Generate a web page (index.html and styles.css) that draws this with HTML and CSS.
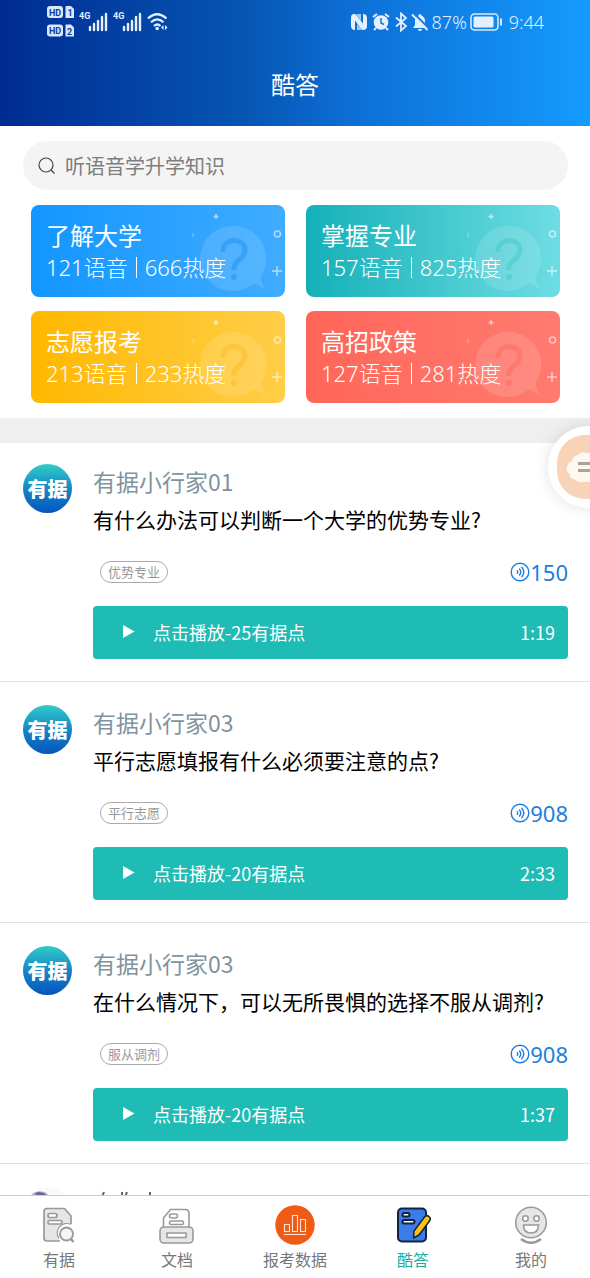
FILE: index.html
```html
<!DOCTYPE html>
<html lang="zh-CN">
<head>
<meta charset="utf-8">
<meta name="viewport" content="width=device-width, initial-scale=1">
<title>酷答</title>
<link rel="stylesheet" href="styles.css">
</head>
<body>
<svg class="defs" aria-hidden="true">
  <symbol id="art" viewBox="0 0 96 92">
    <path d="M41 21a32.500 32.500 0 1 0 21 57l11 6c-2-3-4-8-4-13A32.500 32.500 0 0 0 41 21z" fill="#fff" fill-opacity=".13"/>
    <path class="art-mark" d="M31 47c-1-15 22-15 22-2 0 10-11 9-11 18v2" fill="none" stroke-width="5"/>
    <circle class="art-dot" cx="42" cy="72" r="3"/>
    <path d="M24 9v5M21.500 11.500h5M85 61v10M80 66h10" stroke="#fff" stroke-opacity=".6" stroke-width="1.500"/>
    <circle cx="85.500" cy="29" r="3" fill="none" stroke="#fff" stroke-opacity=".55" stroke-width="1.600"/>
    <circle cx="0" cy="30" r="2.500" fill="#fff" fill-opacity=".2"/>
  </symbol>
  <symbol id="bars" viewBox="0 0 32 22">
    <path d="M11 19v-3M15 19v-6M19 19v-9M23 19V6M27 19V3" stroke="#e4efff" stroke-width="2.400" stroke-linecap="round"/>
  </symbol>
  <symbol id="sound" viewBox="0 0 20 20">
    <g fill="none" stroke="#1b7fe0" stroke-width="1.400" stroke-linecap="round">
      <circle cx="10" cy="10" r="8.800"/>
      <path d="M7.300 8.800q1 1.200 0 2.400M9.500 7q2.500 3 0 6M11.800 5.300q4 4.700 0 9.400"/>
    </g>
  </symbol>
  <symbol id="play" viewBox="0 0 12 14"><path d="M0 0l11.500 6.500L0 13z" fill="#fff"/></symbol>
</svg>

<div class="app">
  <header class="top">
    <div class="status">
      <div class="status-left">
        <svg width="28" height="32" viewBox="0 0 28 32" aria-hidden="true">
          <g fill="#d9e8ff"><rect x="0" y="0" width="16" height="12" rx="3"/><path d="M19 0h5l3 3v9h-8.500V1z"/><rect x="0" y="18.500" width="16" height="12" rx="3"/><path d="M19 18.500h5l3 3v9h-8.500v-11z"/></g>
          <g class="hd"><text x="2" y="9.500">HD</text><text x="20.500" y="10">1</text><text x="2" y="28">HD</text><text x="20" y="28.500">2</text></g>
        </svg>
        <span class="signal"><span class="net">4G</span><svg width="32" height="22"><use href="#bars"/></svg></span>
        <span class="signal"><span class="net">4G</span><svg width="32" height="22"><use href="#bars"/></svg></span>
        <svg class="wifi" width="22" height="20" viewBox="0 0 22 20" aria-hidden="true">
          <g fill="none" stroke="#e4efff" stroke-width="2.200"><path d="M1 6.500q9-8.500 18.500 0M4 10.300q6.200-5.800 12.500 0M7 14q3.300-3 6.500 0"/></g>
          <circle cx="10.200" cy="16.500" r="1.800" fill="#e4efff"/><path d="M16.500 13v5L14 15.500zM18 13v5l2.500-2.500z" fill="#e4efff"/>
        </svg>
      </div>
      <div class="status-right">
        <svg width="18" height="18" viewBox="0 0 18 18" aria-hidden="true"><path d="M4 1h1.500L13 10.500V1q4 0 4 4v8q0 4-4 4h-1L5 7.500V17q-4 0-4-4V5q0-4 3-4z" fill="#e4efff"/><path d="M7 1h4v6.500L7 2.500zM7 17v-6l4 5v1z" fill="#e4efff" fill-opacity=".7"/></svg>
        <svg width="20" height="18" viewBox="0 0 20 18" aria-hidden="true"><circle cx="10" cy="9.500" r="7.300" fill="#e4efff"/><path d="M2 4l4-3M18 4l-4-3M5 15l-2 2M15 15l2 2" stroke="#e4efff" stroke-width="2"/><path d="M10 5v5l3 1.500" fill="none" stroke="#1475d8" stroke-width="1.500"/></svg>
        <svg width="14" height="20" viewBox="0 0 14 20" aria-hidden="true"><path d="M2 5.500l10 8.500-5 4.500V1.500L12 6 2 14.500" fill="none" stroke="#e4efff" stroke-width="1.800"/></svg>
        <svg width="18" height="18" viewBox="0 0 18 18" aria-hidden="true"><path d="M9 1q1.500 0 1.500 1.500Q14 4 14 8v4l2 3H2l2-3V8q0-4 3.500-5.500Q7.500 1 9 1z" fill="#e4efff"/><path d="M7 16h4q0 2-2 2t-2-2" fill="#e4efff"/><path d="M2.500 0l15 15" stroke="#187ce0" stroke-width="2"/><path d="M1 1.500l15.500 15.500" stroke="#e4efff" stroke-width="1.800"/></svg>
        <span class="battery-level">87%</span>
        <svg width="33" height="18" viewBox="0 0 33 18" aria-hidden="true"><rect x="1" y="1" width="27" height="16" rx="3.500" fill="none" stroke="#dcecff" stroke-width="1.500"/><rect x="3.500" y="3.500" width="20" height="11" rx="1.500" fill="#e4efff"/><path d="M31 5.500v7" stroke="#dcecff" stroke-width="2"/></svg>
        <time class="clock">9:44</time>
      </div>
    </div>
    <h1 class="title">酷答</h1>
  </header>

  <main class="main">
    <label class="search">
      <svg width="18" height="18" viewBox="0 0 18 18" aria-hidden="true"><circle cx="8" cy="8" r="7" fill="none" stroke="#444" stroke-width="1.200"/><path d="M13 13l3.500 3.500" stroke="#444" stroke-width="1.300"/></svg>
      <input class="search-input" type="search" placeholder="听语音学升学知识" aria-label="听语音学升学知识">
    </label>

    <section class="cards">
      <a class="card blue" href="#"><svg class="art" width="96" height="92"><use href="#art"/></svg><strong class="card-title">了解大学</strong><span class="card-sub"><span>121语音</span><i class="bar"></i><span>666热度</span></span></a>
      <a class="card teal" href="#"><svg class="art" width="96" height="92"><use href="#art"/></svg><strong class="card-title">掌握专业</strong><span class="card-sub"><span>157语音</span><i class="bar"></i><span>825热度</span></span></a>
      <a class="card gold" href="#"><svg class="art" width="96" height="92"><use href="#art"/></svg><strong class="card-title">志愿报考</strong><span class="card-sub"><span>213语音</span><i class="bar"></i><span>233热度</span></span></a>
      <a class="card red" href="#"><svg class="art" width="96" height="92"><use href="#art"/></svg><strong class="card-title">高招政策</strong><span class="card-sub"><span>127语音</span><i class="bar"></i><span>281热度</span></span></a>
    </section>

    <section class="feed">
      <article class="entry">
        <div class="avatar">有据</div>
        <div class="body">
          <p class="name">有据小行家01</p>
          <h2 class="question">有什么办法可以判断一个大学的优势专业?</h2>
          <div class="meta"><span class="tag">优势专业</span><span class="count"><svg width="20" height="20"><use href="#sound"/></svg>150</span></div>
          <button class="player" type="button"><svg width="12" height="14"><use href="#play"/></svg><span class="player-text">点击播放-25有据点</span><span>1:19</span></button>
        </div>
      </article>
      <article class="entry">
        <div class="avatar">有据</div>
        <div class="body">
          <p class="name">有据小行家03</p>
          <h2 class="question">平行志愿填报有什么必须要注意的点?</h2>
          <div class="meta"><span class="tag">平行志愿</span><span class="count"><svg width="20" height="20"><use href="#sound"/></svg>908</span></div>
          <button class="player" type="button"><svg width="12" height="14"><use href="#play"/></svg><span class="player-text">点击播放-20有据点</span><span>2:33</span></button>
        </div>
      </article>
      <article class="entry">
        <div class="avatar">有据</div>
        <div class="body">
          <p class="name">有据小行家03</p>
          <h2 class="question">在什么情况下，可以无所畏惧的选择不服从调剂?</h2>
          <div class="meta"><span class="tag">服从调剂</span><span class="count"><svg width="20" height="20"><use href="#sound"/></svg>908</span></div>
          <button class="player" type="button"><svg width="12" height="14"><use href="#play"/></svg><span class="player-text">点击播放-20有据点</span><span>1:37</span></button>
        </div>
      </article>
      <article class="entry">
        <svg class="photo" width="49" height="49" viewBox="0 0 49 49" aria-hidden="true"><circle cx="24.500" cy="24.500" r="24.500" fill="#f8fafc"/><path d="M6 11l4-5 6-2 6 1 5 4 2 8H6z" fill="#b9b8d2"/><path d="M12 6l4-1 5 1 2 2-5 2-5-1z" fill="#6a6799"/></svg>
        <div class="body"><svg width="64" height="12" viewBox="0 0 64 12" aria-hidden="true"><path d="M11 7L9 12M29 7v5M34 7l-2 5M57 7v5" stroke="#5c666e" stroke-width="2"/></svg></div>
      </article>
    </section>

    <button class="float" type="button" aria-label="菜单">
      <svg width="82" height="82" viewBox="0 0 82 82" aria-hidden="true">
        <circle cx="41" cy="41" r="41" fill="#fff"/>
        <rect x="9" y="9" width="64" height="64" rx="28" fill="#f8d3b8"/>
        <path d="M26 53q-5-1-4-5-4-2-3-7t5-6q1-6 6-6 3-4 8-2h16v29H36q-6 1-10-3z" fill="#fff8f0"/>
        <path d="M30 37.500h24M30 44.500h24" stroke="#aaa49f" stroke-width="3"/>
      </svg>
    </button>
  </main>

  <nav class="tabs">
    <a class="tab" href="#">
      <svg width="40" height="40" viewBox="0 0 40 40" aria-hidden="true"><g fill="#e6e6e6" stroke="#999" stroke-width="1.700" stroke-linejoin="round"><path d="M32 19V11L25.500 3.500H8q-3 0-3 3V33q0 3 3 3h13"/><g fill="#fff"><rect x="9" y="8.500" width="9" height="4" rx="2"/><rect x="9" y="15.500" width="14" height="3.500" rx="1.500"/></g></g><circle cx="27.500" cy="28" r="9.500" fill="#fff"/><path d="M20 33.500a9.500 9.500 0 0 1 12-14" fill="none" stroke="#999" stroke-width="1.200"/><circle cx="27.500" cy="29" r="6.500" fill="#f4f4f4" stroke="#999" stroke-width="1.800"/><path d="M31.500 33.500l3 3.500" stroke="#999" stroke-width="2.500"/></svg>
      有据</a>
    <a class="tab" href="#">
      <svg width="40" height="40" viewBox="0 0 40 40" aria-hidden="true"><g stroke="#999" stroke-width="1.600" fill="#fff" stroke-linejoin="round"><path d="M6.500 25V13l7-8.500H28q4 0 4 4V25"/><rect x="12.500" y="9" width="8" height="4" rx="2"/><rect x="12.500" y="16" width="14" height="3.500" rx="1.500"/><rect x="3" y="22" width="33" height="16" rx="4" fill="#e6e6e6"/><rect x="10" y="28" width="19" height="4.500"/></g></svg>
      文档</a>
    <a class="tab" href="#">
      <svg width="40" height="40" viewBox="0 0 40 40" aria-hidden="true"><circle cx="20" cy="20" r="19.700" fill="#f05a14"/><g fill="none" stroke="#fff" stroke-opacity=".85" stroke-width="1.100"><rect x="9.500" y="19.500" width="5" height="7"/><rect x="17.500" y="10.500" width="5" height="16"/><rect x="25.500" y="14.500" width="5" height="12"/><path d="M9 29.500h22"/></g></svg>
      报考数据</a>
    <a class="tab active" href="#">
      <svg width="40" height="40" viewBox="0 0 40 40" aria-hidden="true"><g stroke="#14223f" stroke-width="2" stroke-linejoin="round"><rect x="5" y="3.500" width="28" height="33" rx="4" fill="#3b7de8"/><rect x="9.500" y="8" width="7" height="3.500" rx="1.700" fill="#fff"/><rect x="9.500" y="15" width="12" height="3.500" rx="1.700" fill="#fff"/><path d="M20.500 33l.5-7 10.500-14q2-2.500 4.500-.500t.5 4.500L26 30z" fill="#fdc30f" stroke-width="1.500"/></g></svg>
      酷答</a>
    <a class="tab" href="#">
      <svg width="40" height="40" viewBox="0 0 40 40" aria-hidden="true"><g fill="#e6e6e6" stroke="#999" stroke-width="1.500"><circle cx="20" cy="17.500" r="15.300"/><circle cx="14.500" cy="13.500" r="2.700" fill="#fff"/><circle cx="25.500" cy="13.500" r="2.700" fill="#fff"/><path d="M12.500 20h15q0 8-7.500 8t-7.500-8z" fill="#fff"/></g><path d="M10 34q10 7.500 20 0" fill="none" stroke="#999" stroke-width="2.500"/></svg>
      我的</a>
  </nav>
</div>
</body>
</html>
```
FILE: styles.css
```css
* { box-sizing: border-box; }
body { margin: 0; font-family: "Noto Sans CJK SC", sans-serif; color: #000; background: #fff; }
a { color: inherit; text-decoration: none; }
button { border: 0; font: inherit; cursor: pointer; }
svg { flex: none; display: block; }
.defs { position: absolute; width: 0; height: 0; }

.app { display: flex; flex-direction: column; height: 100vh; }

.top { flex: none; padding-bottom: 24px; background: linear-gradient(90deg, #002c92 0%, #0656b4 42%, #0d6fd6 60%, #149bff 100%); color: #e4efff; }
.status { display: flex; justify-content: space-between; height: 44px; padding: 0 46px 0 47px; }
.status-left, .status-right { display: flex; align-items: center; }
.status-left { gap: 2px; }
.status-right { gap: 3px; font-family: "Noto Sans", sans-serif; font-size: 18px; line-height: 24px; font-weight: 300; }
.signal { position: relative; margin-left: 2px; }
.signal + .signal { margin-left: 0; }
.net { position: absolute; top: 0; left: 0; font: bold 9px/10px "Roboto", sans-serif; }
.hd { font: bold 9px "Roboto", sans-serif; fill: #0a3e9d; }
.clock { margin-left: 3px; }
.title { margin: 22px 0 0; font-size: 24px; line-height: 36px; font-weight: 400; text-align: center; color: #fff; }

.main { position: relative; flex: 1; min-height: 0; overflow: hidden; }
.search { display: flex; align-items: center; gap: 9px; height: 49px; margin: 15px 22px 0 23px; padding: 0 15px; border-radius: 25px; background: #f4f4f4; }
.search-input { flex: 1; min-width: 0; padding: 0; border: 0; outline: 0; background: none; font: inherit; font-size: 20px; line-height: 30px; }
.search-input::placeholder { color: #7d7d7d; opacity: 1; }

.cards { display: grid; grid-template-columns: 1fr 1fr; gap: 14px 21px; padding: 15px 30px 15px 31px; }
.card { position: relative; display: flex; flex-direction: column; height: 92px; padding: 14px 15px; border-radius: 8px; overflow: hidden; color: #fff; }
.blue { --mark: #2294f5; background: linear-gradient(90deg, #1296ff, #40acff); }
.teal { --mark: #4ac8ce; background: linear-gradient(90deg, #14b0b8, #6edde3); }
.gold { --mark: #fcbd2c; background: linear-gradient(90deg, #ffb800, #ffce48); }
.red { --mark: #fb6d61; background: linear-gradient(90deg, #ff6659, #ff7b70); }
.art { position: absolute; top: 0; right: -3px; }
.art-mark { stroke: var(--mark); stroke-opacity: .55; }
.art-dot { fill: var(--mark); fill-opacity: .55; }
.card-title { position: relative; font-size: 24px; line-height: 32px; font-weight: 400; }
.card-sub { position: relative; display: flex; align-items: center; gap: 8px; font-family: "Noto Sans", "Noto Sans CJK SC", sans-serif; font-size: 22px; line-height: 32px; font-weight: 300; }
.bar { width: 1px; height: 21px; background: currentColor; }

.feed { border-top: 25px solid #efefef; }
.entry { display: flex; gap: 21px; padding: 19px 22px 22px 23px; border-bottom: 1px solid #e0e0e0; }
.entry + .entry { padding-top: 21px; }
.avatar, .photo { flex: none; width: 49px; height: 49px; margin-top: 2px; }
.avatar { border-radius: 50%; background: linear-gradient(#30cdca, #1686c6 50%, #0555bd); color: #fff; font-size: 20px; line-height: 49px; font-weight: 900; text-align: center; }
.body { flex: 1; min-width: 0; }
.name { margin: 0; font-size: 23px; line-height: 38px; color: #8093a0; }
.question { margin: 0 0 22px; font-size: 21px; line-height: 38px; font-weight: 400; }
.meta { display: flex; justify-content: space-between; align-items: center; height: 24px; margin-bottom: 22px; padding-left: 7px; }
.tag { padding: 0 7px; border: 1px solid #aaa; border-radius: 11px; font-size: 13px; line-height: 20px; color: #999; }
.count { display: flex; align-items: center; font-family: "Noto Sans", sans-serif; font-size: 22px; line-height: 24px; color: #1b7fe0; }
.player { display: flex; align-items: center; width: 100%; height: 53px; padding: 0 13px 2px 30px; border-radius: 4px; background: #1fbcb5; color: #fff; font-size: 18px; }
.player-text { flex: 1; margin-left: 18px; text-align: left; }

.float { position: absolute; top: 300px; right: -40px; padding: 0; border-radius: 50%; background: none; box-shadow: 0 0 16px rgba(0, 0, 0, .12); }

.tabs { flex: none; display: grid; grid-template-columns: repeat(5, 1fr); border-top: 1px solid #ccc; background: #fff; }
.tab { display: flex; flex-direction: column; align-items: center; gap: 1px; padding: 9px 0 5px; font-size: 16px; line-height: 27px; color: #777; }
.active { color: #18ada5; }
```
